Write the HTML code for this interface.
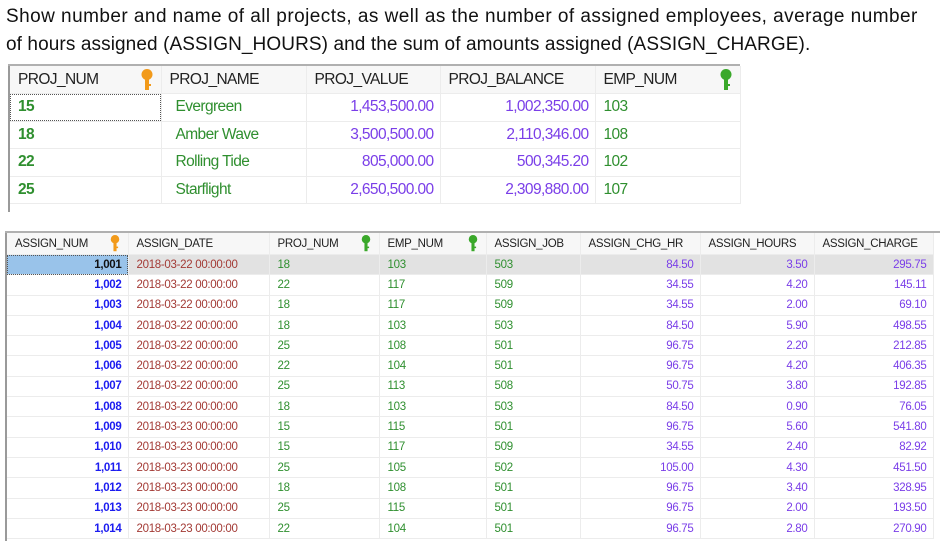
<!DOCTYPE html>
<html><head><meta charset="utf-8"><style>
body{margin:0;width:940px;height:557px;background:#fff;position:relative;overflow:hidden;font-family:"Liberation Sans",sans-serif}
.t{position:absolute;left:6px;font-size:19px;color:#111;white-space:nowrap}
table{position:absolute;border-collapse:collapse;table-layout:fixed}
td,th{padding:0 0 0 8px;white-space:nowrap;overflow:hidden;font-weight:normal;text-align:left;border-right:1px solid #ececec;border-bottom:1px solid #ececec}
th{color:#222;background:#f7f7f7;position:relative}
.r{text-align:right;padding-right:6px}
.g{color:#2f8f2f}.gb{color:#2f8f2f;font-weight:bold}.p{color:#7a3ee8}.b{color:#1c1cf0;font-weight:bold}.br{color:#a33a35}
#t1{left:10px;top:66px;font-size:15.5px;letter-spacing:-0.6px}
#t1 th{height:27px}#t1 td{height:26.5px}
#t2{left:7px;top:233px;font-size:11.5px;letter-spacing:-0.3px}
#t2 th{height:21px}#t2 td{height:19.3px}
.key{position:absolute;right:8px;top:3px}
#t2 .key{top:2px}
.sel td{background:#e2e2e2}
</style></head><body>
<div class="t" style="top:6px;letter-spacing:0.45px">Show number and name of all projects, as well as the number of assigned employees, average number</div>
<div class="t" style="top:34px;letter-spacing:0.1px">of hours assigned (ASSIGN_HOURS) and the sum of amounts assigned (ASSIGN_CHARGE).</div>
<div style="position:absolute;left:8px;top:64px;width:2px;height:148px;background:#9a9a9a"></div>
<div style="position:absolute;left:8px;top:64px;width:732px;height:2px;background:#b0b0b0"></div>
<table id="t1">
<colgroup><col style="width:151px"><col style="width:145px"><col style="width:134px"><col style="width:155px"><col style="width:145px"></colgroup>
<tr><th>PROJ_NUM<svg class="key" width="12" height="22" viewBox="0 0 12 22"><circle cx="6" cy="5.5" r="5.5" fill="#f29a1a"/><rect x="4" y="9" width="4" height="12" fill="#f29a1a"/><rect x="7" y="15" width="3" height="2" fill="#f29a1a"/></svg></th><th>PROJ_NAME</th><th>PROJ_VALUE</th><th>PROJ_BALANCE</th><th>EMP_NUM<svg class="key" width="12" height="22" viewBox="0 0 12 22"><circle cx="6" cy="5.5" r="5.5" fill="#3aa82a"/><rect x="4" y="9" width="4" height="12" fill="#3aa82a"/><rect x="7" y="15" width="3" height="2" fill="#3aa82a"/></svg></th></tr>
<tr><td class="gb" style="outline:1px dotted #555;outline-offset:-1px">15</td><td class="g" style="padding-left:14px">Evergreen</td><td class="p r">1,453,500.00</td><td class="p r">1,002,350.00</td><td class="g">103</td></tr>
<tr><td class="gb">18</td><td class="g" style="padding-left:14px">Amber Wave</td><td class="p r">3,500,500.00</td><td class="p r">2,110,346.00</td><td class="g">108</td></tr>
<tr><td class="gb">22</td><td class="g" style="padding-left:14px">Rolling Tide</td><td class="p r">805,000.00</td><td class="p r">500,345.20</td><td class="g">102</td></tr>
<tr><td class="gb">25</td><td class="g" style="padding-left:14px">Starflight</td><td class="p r">2,650,500.00</td><td class="p r">2,309,880.00</td><td class="g">107</td></tr>
</table>
<div style="position:absolute;left:5px;top:231px;width:2px;height:310px;background:#9a9a9a"></div>
<div style="position:absolute;left:5px;top:231px;width:935px;height:2px;background:#b0b0b0"></div>
<table id="t2">
<colgroup><col style="width:121px"><col style="width:141px"><col style="width:110px"><col style="width:107px"><col style="width:94px"><col style="width:120px"><col style="width:114px"><col style="width:119px"></colgroup>
<tr><th>ASSIGN_NUM<svg class="key" width="10" height="17" viewBox="0 0 12 22"><circle cx="6" cy="5.5" r="5.5" fill="#f29a1a"/><rect x="4" y="9" width="4" height="12" fill="#f29a1a"/><rect x="7" y="15" width="3" height="2" fill="#f29a1a"/></svg></th><th>ASSIGN_DATE</th><th>PROJ_NUM<svg class="key" width="10" height="17" viewBox="0 0 12 22"><circle cx="6" cy="5.5" r="5.5" fill="#3aa82a"/><rect x="4" y="9" width="4" height="12" fill="#3aa82a"/><rect x="7" y="15" width="3" height="2" fill="#3aa82a"/></svg></th><th>EMP_NUM<svg class="key" width="10" height="17" viewBox="0 0 12 22"><circle cx="6" cy="5.5" r="5.5" fill="#3aa82a"/><rect x="4" y="9" width="4" height="12" fill="#3aa82a"/><rect x="7" y="15" width="3" height="2" fill="#3aa82a"/></svg></th><th>ASSIGN_JOB</th><th>ASSIGN_CHG_HR</th><th>ASSIGN_HOURS</th><th>ASSIGN_CHARGE</th></tr>
<tr class="sel"><td class="b r" style="background:#99c3ea;color:#111;outline:1px dotted #555;outline-offset:-1px">1,001</td><td class="br">2018-03-22 00:00:00</td><td class="g">18</td><td class="g">103</td><td class="g">503</td><td class="p r">84.50</td><td class="p r">3.50</td><td class="p r">295.75</td></tr>
<tr><td class="b r">1,002</td><td class="br">2018-03-22 00:00:00</td><td class="g">22</td><td class="g">117</td><td class="g">509</td><td class="p r">34.55</td><td class="p r">4.20</td><td class="p r">145.11</td></tr>
<tr><td class="b r">1,003</td><td class="br">2018-03-22 00:00:00</td><td class="g">18</td><td class="g">117</td><td class="g">509</td><td class="p r">34.55</td><td class="p r">2.00</td><td class="p r">69.10</td></tr>
<tr><td class="b r">1,004</td><td class="br">2018-03-22 00:00:00</td><td class="g">18</td><td class="g">103</td><td class="g">503</td><td class="p r">84.50</td><td class="p r">5.90</td><td class="p r">498.55</td></tr>
<tr><td class="b r">1,005</td><td class="br">2018-03-22 00:00:00</td><td class="g">25</td><td class="g">108</td><td class="g">501</td><td class="p r">96.75</td><td class="p r">2.20</td><td class="p r">212.85</td></tr>
<tr><td class="b r">1,006</td><td class="br">2018-03-22 00:00:00</td><td class="g">22</td><td class="g">104</td><td class="g">501</td><td class="p r">96.75</td><td class="p r">4.20</td><td class="p r">406.35</td></tr>
<tr><td class="b r">1,007</td><td class="br">2018-03-22 00:00:00</td><td class="g">25</td><td class="g">113</td><td class="g">508</td><td class="p r">50.75</td><td class="p r">3.80</td><td class="p r">192.85</td></tr>
<tr><td class="b r">1,008</td><td class="br">2018-03-22 00:00:00</td><td class="g">18</td><td class="g">103</td><td class="g">503</td><td class="p r">84.50</td><td class="p r">0.90</td><td class="p r">76.05</td></tr>
<tr><td class="b r">1,009</td><td class="br">2018-03-23 00:00:00</td><td class="g">15</td><td class="g">115</td><td class="g">501</td><td class="p r">96.75</td><td class="p r">5.60</td><td class="p r">541.80</td></tr>
<tr><td class="b r">1,010</td><td class="br">2018-03-23 00:00:00</td><td class="g">15</td><td class="g">117</td><td class="g">509</td><td class="p r">34.55</td><td class="p r">2.40</td><td class="p r">82.92</td></tr>
<tr><td class="b r">1,011</td><td class="br">2018-03-23 00:00:00</td><td class="g">25</td><td class="g">105</td><td class="g">502</td><td class="p r">105.00</td><td class="p r">4.30</td><td class="p r">451.50</td></tr>
<tr><td class="b r">1,012</td><td class="br">2018-03-23 00:00:00</td><td class="g">18</td><td class="g">108</td><td class="g">501</td><td class="p r">96.75</td><td class="p r">3.40</td><td class="p r">328.95</td></tr>
<tr><td class="b r">1,013</td><td class="br">2018-03-23 00:00:00</td><td class="g">25</td><td class="g">115</td><td class="g">501</td><td class="p r">96.75</td><td class="p r">2.00</td><td class="p r">193.50</td></tr>
<tr><td class="b r">1,014</td><td class="br">2018-03-23 00:00:00</td><td class="g">22</td><td class="g">104</td><td class="g">501</td><td class="p r">96.75</td><td class="p r">2.80</td><td class="p r">270.90</td></tr>
</table>
</body></html>
